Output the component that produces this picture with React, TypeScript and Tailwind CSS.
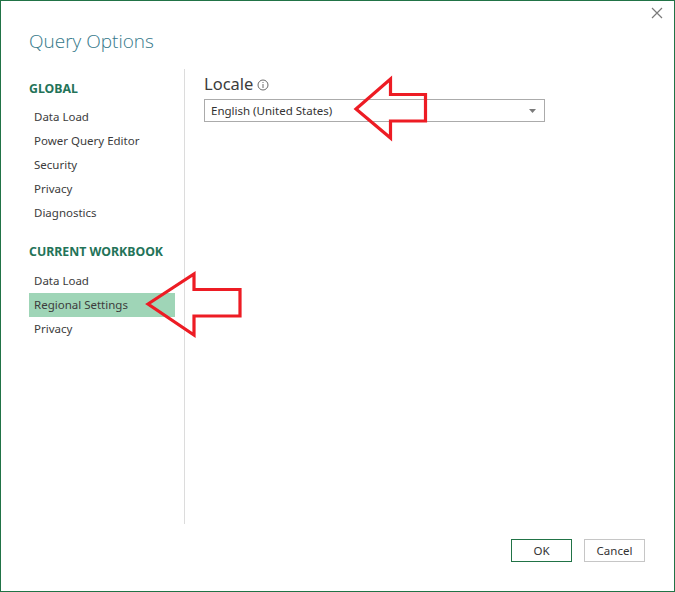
import React from "react";

const font = { fontFamily: '"Noto Sans", "Segoe UI", sans-serif' };

function Item({ label, selected }: { label: string; selected?: boolean }) {
  return (
    <div
      className={
        "ml-[28px] w-[146px] h-[24px] pl-[5px] flex items-center text-[11.5px] text-[#3c3c3c] " +
        (selected ? "bg-[#9fd5b7]" : "")
      }
    >
      {label}
    </div>
  );
}

export default function App() {
  return (
    <div
      className="relative w-[675px] h-[592px] bg-white border border-[#217346] flex flex-col overflow-hidden"
      style={font}
    >
      {/* close */}
      <svg className="absolute right-[11px] top-[6px]" width="12" height="12" viewBox="0 0 12 12">
        <path d="M1 1 L11 11 M11 1 L1 11" stroke="#7a7a7a" strokeWidth="1.2" fill="none" />
      </svg>

      {/* title */}
      <div className="h-[68px] pl-[28px] pt-[26px]">
        <div
          className="text-[19px] leading-[28px] text-[#35788a] font-light"
          style={{ fontFamily: '"Open Sans", "Noto Sans", sans-serif' }}
        >
          Query Options
        </div>
      </div>

      {/* body */}
      <div className="flex h-[455px]">
        <div className="w-[184px] border-r border-[#dcdcdc] pt-[10px]">
          <div className="pl-[28px] h-[20px] leading-[20px] text-[12.3px] font-bold text-[#237358]">GLOBAL</div>
          <div className="mt-[6px]">
            <Item label="Data Load" />
            <Item label="Power Query Editor" />
            <Item label="Security" />
            <Item label="Privacy" />
            <Item label="Diagnostics" />
          </div>
          <div className="mt-[17px] pl-[28px] h-[20px] leading-[20px] text-[12.3px] font-bold text-[#237358]">
            CURRENT WORKBOOK
          </div>
          <div className="mt-[7px]">
            <Item label="Data Load" />
            <Item label="Regional Settings" selected />
            <Item label="Privacy" />
          </div>
        </div>
        <div className="flex-1 pl-[19px] pt-[4px]">
          <div className="flex items-center h-[22px] gap-[4px]">
            <span className="text-[16.5px] text-[#3c3c3c]">Locale</span>
            <svg width="12" height="12" viewBox="0 0 12 12" className="mt-[1px]">
              <circle cx="6" cy="6" r="5" stroke="#6a6a6a" strokeWidth="1" fill="none" />
              <path d="M6 5 L6 9" stroke="#6a6a6a" strokeWidth="1" />
              <rect x="5.5" y="3" width="1" height="1" fill="#6a6a6a" />
            </svg>
          </div>
          <div className="mt-[4px] w-[341px] h-[23px] border border-[#ababab] flex items-center justify-between pl-[6px] pr-[8px]">
            <span className="text-[11.5px] text-[#333]">English (United States)</span>
            <svg width="7" height="4" viewBox="0 0 7 4">
              <path d="M0 0 L7 0 L3.5 4 Z" fill="#7a7a7a" />
            </svg>
          </div>
        </div>
      </div>

      {/* footer */}
      <div className="flex justify-end gap-[12px] pr-[29px] pt-[15px]">
        <button className="w-[61px] h-[23px] border border-[#217346] text-[11.5px] text-[#333] flex items-center justify-center">
          OK
        </button>
        <button className="w-[61px] h-[23px] border border-[#c6c6c6] text-[11.5px] text-[#333] flex items-center justify-center">
          Cancel
        </button>
      </div>

      {/* annotation arrows */}
      <svg className="absolute left-[-1px] top-[-1px] pointer-events-none" width="675" height="592">
        <polygon
          points="356,109 390.5,79 390.5,94.5 425.5,94.5 425.5,121 390.5,121 390.5,138"
          fill="none"
          stroke="#ed1c24"
          strokeWidth="3.2"
          strokeLinejoin="miter"
        />
        <polygon
          points="148,304 194,274 194,289.5 240,289.5 240,316 194,316 194,335"
          fill="none"
          stroke="#ed1c24"
          strokeWidth="3.2"
          strokeLinejoin="miter"
        />
      </svg>
    </div>
  );
}
